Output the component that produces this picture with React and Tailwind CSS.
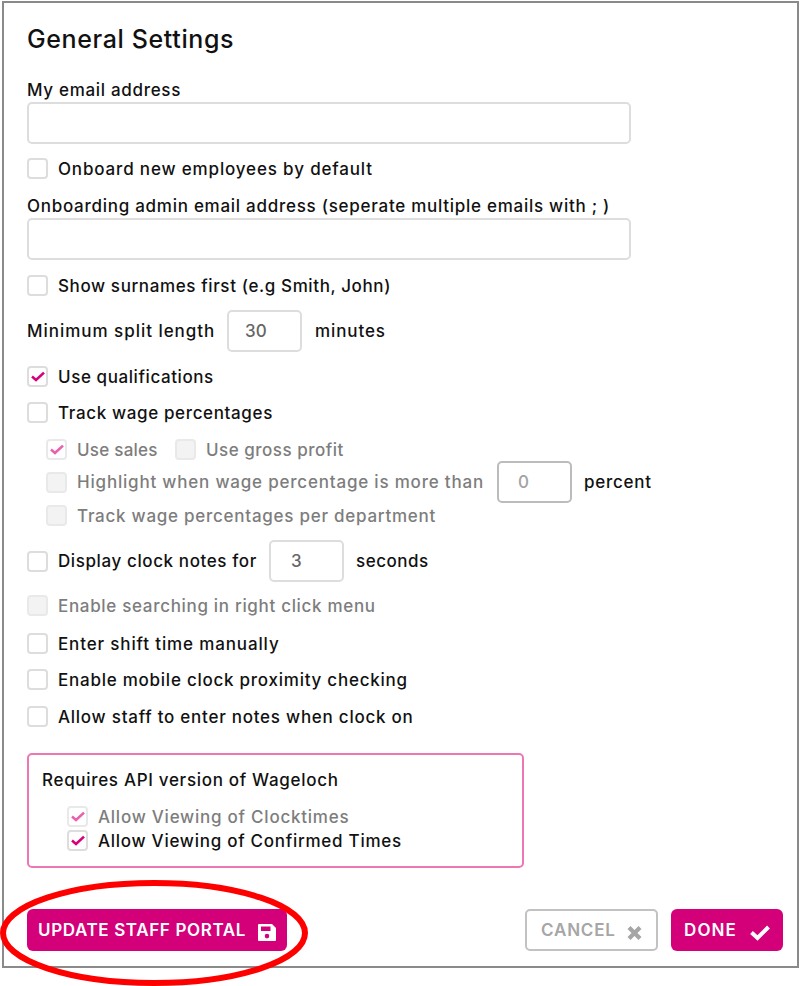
import clsx from "clsx";

function Check({ className }) {
    return (
        <svg viewBox="0 0 14 11" className={className} fill="none" stroke="currentColor" strokeWidth="2.6">
            <path d="M1 5.6 L5 9 L13 1.6" />
        </svg>
    );
}

function Checkbox({ label, checked, disabled, className, textClass = "tracking-[0.5px]" }) {
    return (
        <label className={clsx("flex items-center h-[21px] shrink-0", className)}>
            <span
                className={clsx(
                    "w-[21px] h-[21px] shrink-0 border-2 rounded-[4px] flex items-center justify-center",
                    disabled ? "border-[#e9e9e9]" : "border-[#dddddd]",
                    disabled && !checked ? "bg-[#f3f3f3]" : "bg-white"
                )}
            >
                {checked && <Check className={clsx("w-[14px] h-[11px]", disabled ? "text-[#ea5fae]" : "text-[#d6007b]")} />}
            </span>
            <span className={clsx("ml-[10px] whitespace-nowrap", disabled ? "text-[#7d7d7d]" : "text-[#111]", textClass)}>
                {label}
            </span>
        </label>
    );
}

function NumberBox({ value, className }) {
    return (
        <div className={clsx("w-[75px] h-[42px] shrink-0 border-2 rounded-[5px] flex items-center", className)}>
            {value}
        </div>
    );
}

export default function App() {
    return (
        <div className="relative w-[800px] h-[986px] bg-white overflow-hidden pt-px pl-[2px] font-['Inter',sans-serif] text-[17px] leading-6 font-medium text-[#111]">
            <div className="w-[797px] h-[967px] border-2 border-[#8a8a8a] pl-[23px] pr-[14px] pt-4 flex flex-col items-start">
                <h1 className="h-10 leading-10 text-[25px] whitespace-nowrap tracking-[0.62px]">General Settings</h1>

                <div className="mt-[19px] h-6 whitespace-nowrap tracking-[0.69px]">My email address</div>
                <div className="w-[604px] h-[42px] border-2 border-[#dddddd] rounded-[5px]" />
                <Checkbox className="mt-[14px]" label="Onboard new employees by default" textClass="tracking-[0.84px]" />

                <div className="mt-[15px] h-6 whitespace-nowrap tracking-[0.73px]">
                    Onboarding admin email address (seperate multiple emails with ; )
                </div>
                <div className="w-[604px] h-[42px] border-2 border-[#dddddd] rounded-[5px]" />
                <Checkbox className="mt-[15px]" label="Show surnames first (e.g Smith, John)" textClass="tracking-[0.61px]" />

                <div className="mt-[14px] flex items-center">
                    <span className="w-[200px] whitespace-nowrap tracking-[0.97px]">Minimum split length</span>
                    <NumberBox value="30" className="border-[#dddddd] text-[#666] pl-[16px]" />
                    <span className="ml-[13px] tracking-[0.9px]">minutes</span>
                </div>

                <Checkbox className="mt-[14px]" label="Use qualifications" checked textClass="tracking-[0.58px]" />
                <Checkbox className="mt-[15px]" label="Track wage percentages" textClass="tracking-[0.64px]" />

                {/* Wage percentage sub options */}
                <div className="mt-4 pl-[19px] flex">
                    <Checkbox className="w-[129px]" label="Use sales" checked disabled textClass="tracking-[0.25px]" />
                    <Checkbox label="Use gross profit" disabled />
                </div>
                <div className="mt-px pl-[19px] flex items-center">
                    <Checkbox className="w-[451px]" label="Highlight when wage percentage is more than" disabled textClass="tracking-[0.8px]" />
                    <NumberBox value="0" className="border-[#bcbcbc] text-[#a3a3a3] pl-[19px]" />
                    <span className="ml-[12px] tracking-[0.75px]">percent</span>
                </div>
                <Checkbox className="mt-[2px] ml-[19px]" label="Track wage percentages per department" disabled textClass="tracking-[0.74px]" />

                <div className="mt-[14px] flex items-center">
                    <Checkbox className="w-[242px]" label="Display clock notes for" textClass="tracking-[0.6px]" />
                    <NumberBox value="3" className="border-[#dddddd] text-[#666] pl-[20px]" />
                    <span className="ml-[12px] tracking-[0.5px]">seconds</span>
                </div>
                <Checkbox className="mt-[13px]" label="Enable searching in right click menu" disabled textClass="tracking-[0.68px]" />
                <Checkbox className="mt-[17px]" label="Enter shift time manually" textClass="tracking-[0.86px]" />
                <Checkbox className="mt-[15px]" label="Enable mobile clock proximity checking" textClass="tracking-[0.75px]" />
                <Checkbox className="mt-[16px]" label="Allow staff to enter notes when clock on" textClass="tracking-[0.75px]" />

                <div className="mt-[26px] w-[497px] h-[115px] border-2 border-[#ee77b3] rounded-[5px] pl-[13px] pt-[13px]">
                    <div className="h-6 whitespace-nowrap tracking-[0.69px]">Requires API version of Wageloch</div>
                    <div className="pl-[25px]">
                        <Checkbox className="mt-[14px]" label="Allow Viewing of Clocktimes" checked disabled textClass="tracking-[0.76px]" />
                        <Checkbox className="mt-[3px]" label="Allow Viewing of Confirmed Times" checked textClass="tracking-[0.73px]" />
                    </div>
                </div>

                {/* Footer buttons */}
                <div className="mt-[41px] w-[756px] flex items-center font-semibold">
                    <button className="w-[260px] h-[42px] bg-[#d4007a] text-white rounded-[6px] pl-[11px] flex items-center">
                        <span className="w-[220px] text-left whitespace-nowrap tracking-[0.63px]">UPDATE STAFF PORTAL</span>
                        <svg viewBox="0 0 18 17" className="w-[18px] h-[17px] mt-[5px]" fill="currentColor" fillRule="evenodd">
                            <path d="M1 0H14L18 4V16a1 1 0 0 1-1 1H1a1 1 0 0 1-1-1V1a1 1 0 0 1 1-1ZM3 2.5V7H12.500V2.500ZM9 9.800a2.300 2.300 0 1 0 0 4.600a2.300 2.300 0 1 0 0-4.600Z" />
                        </svg>
                    </button>
                    <button className="ml-auto w-[133px] h-[42px] border-2 border-[#c2c2c2] text-[#a6a6a6] rounded-[5px] pl-[14px] flex items-center">
                        <span className="w-[86px] text-left tracking-[0.83px]">CANCEL</span>
                        <svg viewBox="0 0 14 14" className="w-[15px] h-[14px] mt-[5px]" stroke="currentColor" strokeWidth="4.2">
                            <path d="M1.500 1.500 L12.500 12.500 M12.500 1.500 L1.500 12.500" />
                        </svg>
                    </button>
                    <button className="ml-[13px] w-[112px] h-[42px] bg-[#d4007a] text-white rounded-[6px] pl-[13px] flex items-center">
                        <span className="w-[66px] text-left tracking-[1.1px]">DONE</span>
                        <svg viewBox="0 0 20 16" className="w-[20px] h-[16px] mt-[5px]" fill="none" stroke="currentColor" strokeWidth="4">
                            <path d="M1.500 7.500 L7.500 13 L18.500 2" />
                        </svg>
                    </button>
                </div>
            </div>

            {/* Highlight ring over the update button */}
            <svg viewBox="0 0 308 106" className="absolute left-0 top-[880px] w-[308px] h-[106px]" fill="none">
                <ellipse cx="154" cy="53" rx="151" ry="50" stroke="#ff0000" strokeWidth="6" />
            </svg>
        </div>
    );
}
